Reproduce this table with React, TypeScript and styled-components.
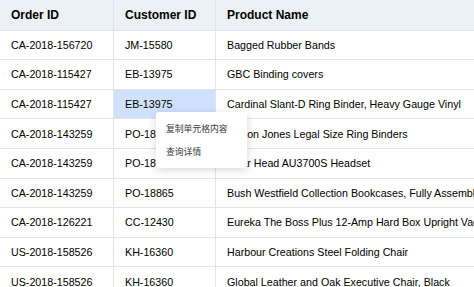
import React from "react";
import styled, { createGlobalStyle } from "styled-components";

const GlobalStyle = createGlobalStyle`
  html, body {
    margin: 0;
    padding: 0;
    background: #ffffff;
    overflow: hidden;
  }
  body {
    font-family: "Liberation Sans", Arial, "Noto Sans CJK SC", sans-serif;
  }
`;

const ROW_H = 29.6;

const Page = styled.div`
  position: relative;
  width: 474px;
  height: 287px;
  overflow: hidden;
  background: #ffffff;
`;

const Table = styled.div`
  display: grid;
  grid-template-columns: 113px 102px 420px;
  grid-auto-rows: ${ROW_H}px;
  width: 635px;
`;

const Cell = styled.div<{ $col: number; $header?: boolean; $selected?: boolean; $first?: boolean }>`
  box-sizing: border-box;
  display: flex;
  align-items: center;
  padding-left: ${(p) => (p.$col === 0 ? 11 : 11)}px;
  border-left: ${(p) => (p.$col === 0 ? "none" : "1px solid #e1e4e8")};
  border-top: ${(p) => (p.$first ? "none" : "1px solid #e1e4e8")};
  background: ${(p) => (p.$header ? "#ecf1f5" : p.$selected ? "#cfe1fd" : "#ffffff")};
  color: #000000;
  font-size: ${(p) => (p.$header ? "12px" : "10.7px")};
  font-weight: ${(p) => (p.$header ? 700 : 400)};
  white-space: nowrap;
  overflow: hidden;
`;

const Menu = styled.div`
  position: absolute;
  left: 156px;
  top: 112px;
  width: 91px;
  box-sizing: border-box;
  padding: 5px 0;
  background: #ffffff;
  border-radius: 3px;
  box-shadow: 0 2px 8px rgba(0, 0, 0, 0.16);
  font-family: "Noto Sans CJK SC", "Liberation Sans", sans-serif;
`;

const MenuItem = styled.div`
  height: 23px;
  display: flex;
  align-items: center;
  padding-left: 10px;
  font-size: 8.8px;
  color: #3a3a3a;
  white-space: nowrap;
`;

const headers = ["Order ID", "Customer ID", "Product Name"];

const rows: string[][] = [
  ["CA-2018-156720", "JM-15580", "Bagged Rubber Bands"],
  ["CA-2018-115427", "EB-13975", "GBC Binding covers"],
  ["CA-2018-115427", "EB-13975", "Cardinal Slant-D Ring Binder, Heavy Gauge Vinyl"],
  ["CA-2018-143259", "PO-18865", "Wilson Jones Legal Size Ring Binders"],
  ["CA-2018-143259", "PO-18865", "Gear Head AU3700S Headset"],
  ["CA-2018-143259", "PO-18865", "Bush Westfield Collection Bookcases, Fully Assembled"],
  ["CA-2018-126221", "CC-12430", "Eureka The Boss Plus 12-Amp Hard Box Upright Vacuum, Red"],
  ["US-2018-158526", "KH-16360", "Harbour Creations Steel Folding Chair"],
  ["US-2018-158526", "KH-16360", "Global Leather and Oak Executive Chair, Black"],
];

export default function App() {
  return (
    <>
      <GlobalStyle />
      <Page>
        <Table>
          {headers.map((h, c) => (
            <Cell key={h} $col={c} $header $first>
              {h}
            </Cell>
          ))}
          {rows.map((r, ri) =>
            r.map((v, c) => (
              <Cell key={`${ri}-${c}`} $col={c} $selected={ri === 2 && c === 1}>
                {v}
              </Cell>
            ))
          )}
        </Table>
        <Menu>
          <MenuItem>复制单元格内容</MenuItem>
          <MenuItem>查询详情</MenuItem>
        </Menu>
      </Page>
    </>
  );
}
